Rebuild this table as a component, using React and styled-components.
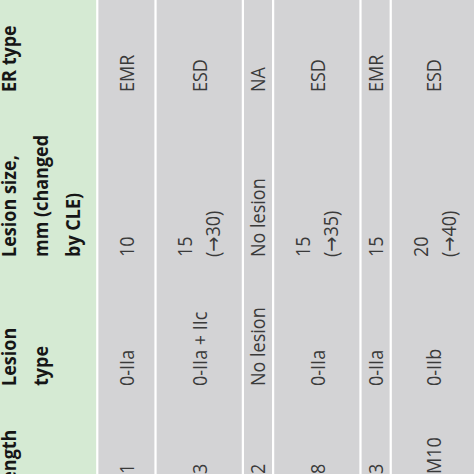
import styled, { createGlobalStyle } from "styled-components";

const Global = createGlobalStyle`
  html, body {
    margin: 0;
    padding: 0;
    background: #ffffff;
  }
`;

// the source figure is a table turned on its side and squeezed into a square
const Frame = styled.div`
  width: 474px;
  height: 474px;
  overflow: hidden;
  background: #ffffff;
`;

const Table = styled.div`
  width: 482px;
  display: flex;
  flex-direction: column;
  gap: 2.05px;
  background: #ffffff;
  font-family: "Open Sans", "Noto Sans", "DejaVu Sans", sans-serif;
  font-size: 18px;
  transform-origin: 0 0;
  transform: translate(-8px, 478px) rotate(-90deg) scaleY(1.12);
`;

const Row = styled.div`
  display: grid;
  grid-template-columns: 88px 129px 165px 100px;
`;

const HeadRow = styled(Row)`
  background: #d5ead3;
  align-items: start;
`;

const BodyRow = styled(Row)`
  background: #d3d3d5;
  align-items: center;
  height: ${(p) => p.$lines * 25.2}px;
`;

const HeadCell = styled.div`
  padding: 0 4px 6px;
  margin-left: ${(p) => -(p.$pull || 0)}px;
  font-weight: 700;
  line-height: 29px;
  color: #161616;
  white-space: nowrap;
`;

const Cell = styled.div`
  padding: 0 4px;
  line-height: 25.2px;
  color: #3a3a3a;
  white-space: nowrap;
`;

const headers = [
  { pull: 18, parts: ["Length"] },
  { parts: ["Lesion", "type"] },
  { parts: ["Lesion size,", "mm (changed", "by CLE)"] },
  { parts: ["ER type"] },
];

const rows = [
  { lines: 2, cells: [["1"], ["0-IIa"], ["10"], ["EMR"]] },
  { lines: 3, cells: [["3"], ["0-IIa + IIc"], ["15", "(→30)"], ["ESD"]] },
  { lines: 1, cells: [["2"], ["No lesion"], ["No lesion"], ["NA"]] },
  { lines: 3, cells: [["8"], ["0-IIa"], ["15", "(→35)"], ["ESD"]] },
  { lines: 1, cells: [["3"], ["0-IIa"], ["15"], ["EMR"]] },
  { lines: 3, cells: [["M10"], ["0-IIb"], ["20", "(→40)"], ["ESD"]] },
];

const Lines = ({ parts }) =>
  parts.map((t, i) => (
    <span key={i}>
      {i > 0 && <br />}
      {t}
    </span>
  ));

export default function App() {
  return (
    <Frame>
      <Global />
      <Table>
        <HeadRow>
          {headers.map((h, i) => (
            <HeadCell key={i} $pull={h.pull}>
              <Lines parts={h.parts} />
            </HeadCell>
          ))}
        </HeadRow>
        {rows.map((r, i) => (
          <BodyRow key={i} $lines={r.lines}>
            {r.cells.map((c, j) => (
              <Cell key={j}>
                <Lines parts={c} />
              </Cell>
            ))}
          </BodyRow>
        ))}
      </Table>
    </Frame>
  );
}
